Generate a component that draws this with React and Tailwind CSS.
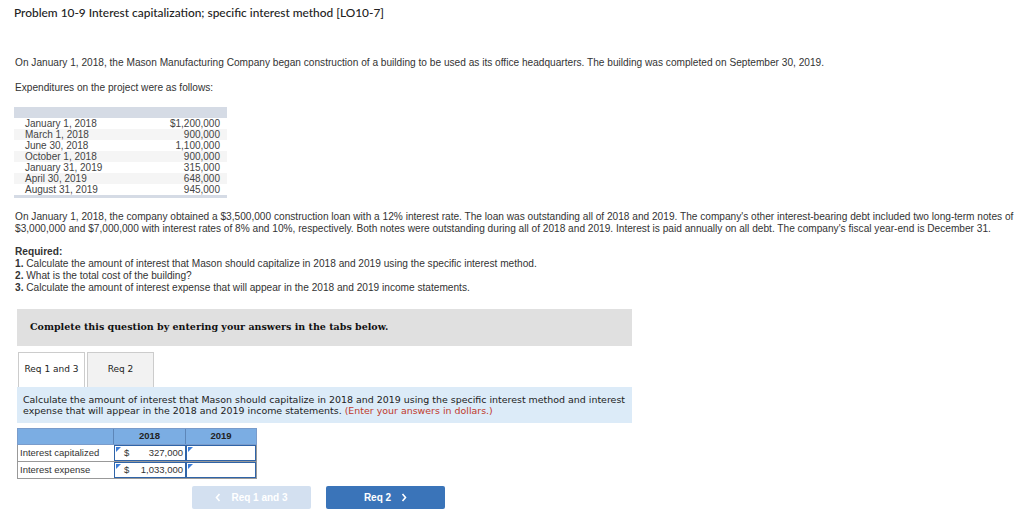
import React from "react";

const rows = [
  ["January 1, 2018", "$1,200,000"],
  ["March 1, 2018", "900,000"],
  ["June 30, 2018", "1,100,000"],
  ["October 1, 2018", "900,000"],
  ["January 31, 2019", "315,000"],
  ["April 30, 2019", "648,000"],
  ["August 31, 2019", "945,000"],
];

function Flag() {
  return (
    <svg className="absolute left-[1px] top-[1px]" width="5" height="5" viewBox="0 0 5 5">
      <path d="M0 0 L5 0 L0 5 Z" fill="#3b7dd8" />
    </svg>
  );
}

function Chevron({ left }) {
  return (
    <svg width="6" height="9" viewBox="0 0 6 9">
      <path
        d={left ? "M4.5 1 L1.5 4.5 L4.5 8" : "M1.5 1 L4.5 4.5 L1.5 8"}
        fill="none"
        stroke="currentColor"
        strokeWidth="1.6"
      />
    </svg>
  );
}

export default function App() {
  const arial = { fontFamily: '"Liberation Sans", Arial, sans-serif' };
  const verdana = { fontFamily: '"DejaVu Sans", Verdana, sans-serif' };
  return (
    <div className="w-[1024px] h-[517px] bg-white text-[#333] overflow-hidden relative">
      <div className="pl-[14px] pt-[4px]">
        <h1 className="text-[11.9px] leading-[18px] text-[#222] font-medium" style={{ fontFamily: 'Lato, "Open Sans", sans-serif' }}>
          Problem 10-9 Interest capitalization; specific interest method [LO10-7]
        </h1>
      </div>

      <div className="pl-[15px] mt-[35px] text-[10.15px] leading-[12px] text-[#333]" style={arial}>
        <p className="whitespace-nowrap">
          On January 1, 2018, the Mason Manufacturing Company began construction of a building to be used as its office headquarters. The building was completed on September 30, 2019.
        </p>
        <p className="mt-[13px] whitespace-nowrap">Expenditures on the project were as follows:</p>

        <div className="mt-[13px] w-[213px] ml-[-1px] text-[10px]">
          <div className="h-[11px] bg-[#d5dbe5]" />
          {rows.map((r, i) => (
            <div
              key={i}
              className={`flex justify-between h-[11px] leading-[11px] pl-[11px] pr-[7px] text-[#444] ${i % 2 === 1 ? "bg-[#f5f5f5]" : "bg-white"}`}
            >
              <span>{r[0]}</span>
              <span>{r[1]}</span>
            </div>
          ))}
          <div className="h-[3px] bg-[#d5dbe5]" />
        </div>

        <p className="mt-[13px] whitespace-nowrap">
          On January 1, 2018, the company obtained a $3,500,000 construction loan with a 12% interest rate. The loan was outstanding all of 2018 and 2019. The company's other interest-bearing debt included two long-term notes of
          <br />
          $3,000,000 and $7,000,000 with interest rates of 8% and 10%, respectively. Both notes were outstanding during all of 2018 and 2019. Interest is paid annually on all debt. The company's fiscal year-end is December 31.
        </p>

        <p className="mt-[11px] font-bold">Required:</p>
        <p className="whitespace-nowrap"><b>1.</b> Calculate the amount of interest that Mason should capitalize in 2018 and 2019 using the specific interest method.</p>
        <p className="whitespace-nowrap"><b>2.</b> What is the total cost of the building?</p>
        <p className="whitespace-nowrap"><b>3.</b> Calculate the amount of interest expense that will appear in the 2018 and 2019 income statements.</p>
      </div>

      <div className="ml-[17px] w-[615px] mt-[15px]">
        <div className="h-[37px] bg-[#e0e0e0] flex items-center pl-[13px]">
          <span className="text-[9.5px] font-bold text-[#111]" style={{ fontFamily: '"DejaVu Serif", Georgia, serif' }}>
            Complete this question by entering your answers in the tabs below.
          </span>
        </div>

        <div className="flex gap-[2px] mt-[6px] pl-[1px] text-[9px] text-[#222]" style={verdana}>
          <div className="w-[67px] h-[35px] border border-[#ccc] border-b-0 bg-white flex items-center justify-center">Req 1 and 3</div>
          <div className="w-[67px] h-[35px] border border-[#ccc] border-b-0 bg-[#f2f2f2] flex items-center justify-center">Req 2</div>
        </div>

        <div className="bg-[#dcebf8] h-[36px] pl-[6px] pt-[7px] text-[9.45px] leading-[11px] text-[#222]" style={verdana}>
          <p className="whitespace-nowrap">Calculate the amount of interest that Mason should capitalize in 2018 and 2019 using the specific interest method and interest</p>
          <p className="whitespace-nowrap">
            expense that will appear in the 2018 and 2019 income statements. <span className="text-[#c0392b]">(Enter your answers in dollars.)</span>
          </p>
        </div>

        <div className="mt-[5px] w-[240px] text-[9.5px]" style={arial}>
          <div className="flex h-[17px] bg-[#7badE3] border border-[#7a9ccb] font-bold text-[#222]">
            <div className="w-[96px] border-r border-[#5d86b8]" />
            <div className="w-[72px] border-r border-[#5d86b8] flex items-center justify-center">2018</div>
            <div className="flex-1 flex items-center justify-center">2019</div>
          </div>
          {[["Interest capitalized", "327,000"], ["Interest expense", "1,033,000"]].map((r, i) => (
            <div key={i} className="flex h-[17px] border-x border-b border-[#999]">
              <div className="w-[96px] pl-[2px] flex items-center text-[#333]">{r[0]}</div>
              <div className="w-[72px] relative border border-[#2f64a8] flex items-center justify-between pl-[9px] pr-[2px] text-[#333]">
                <Flag />
                <span>$</span>
                <span>{r[1]}</span>
              </div>
              <div className="flex-1 relative border border-[#2f64a8]">
                <Flag />
              </div>
            </div>
          ))}
        </div>

        <div className="flex gap-[15px] ml-[175px] mt-[7px] text-[10px] font-bold text-white" style={arial}>
          <div className="w-[119px] h-[23px] bg-[#d3e0f0] rounded-[2px] flex items-center justify-center gap-[10px]">
            <Chevron left />
            <span>Req 1 and 3</span>
          </div>
          <div className="w-[119px] h-[23px] bg-[#3a74b9] rounded-[2px] flex items-center justify-center gap-[10px]">
            <span>Req 2</span>
            <Chevron />
          </div>
        </div>
      </div>
    </div>
  );
}
